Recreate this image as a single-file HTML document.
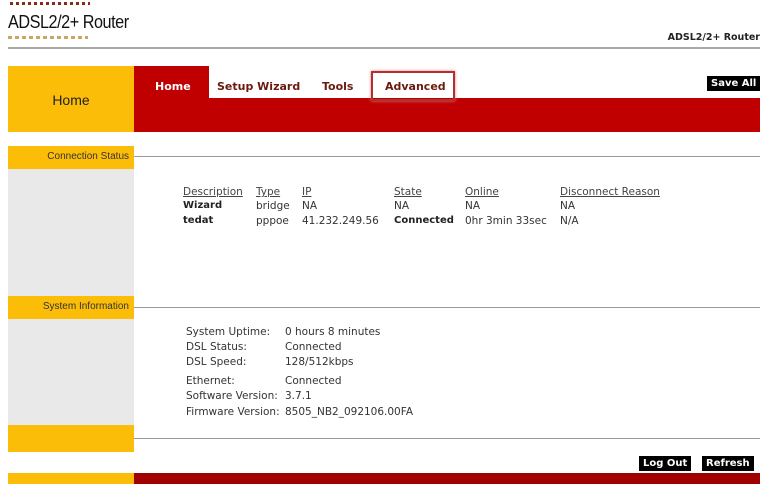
<!DOCTYPE html>
<html><head><style>
body{margin:0;width:768px;height:484px;background:#fff;font-family:"DejaVu Sans","Liberation Sans",sans-serif;position:relative;overflow:hidden}
div{position:absolute}
.t{font-size:10.5px;color:#333;white-space:nowrap}
.b{font-weight:bold;color:#222}
.u{text-decoration:underline;color:#444}
.btn{background:#000;color:#fff;font-weight:bold;font-size:10px;padding:1px 4px;line-height:13px}
.tab{font-size:11px;font-weight:bold;color:#6a1a10;top:80px}
</style></head><body>
<div style="left:10px;top:2px;width:80px;height:3px;background:repeating-linear-gradient(90deg,#8a2a18 0 3px,transparent 3px 6px)"></div>
<div style="left:8px;top:12px;font-family:'Liberation Sans',sans-serif;font-size:18px;letter-spacing:-0.5px;color:#111;transform:scaleX(0.9);transform-origin:left">ADSL2/2+ Router</div>
<div style="left:8px;top:36px;width:80px;height:3px;background:repeating-linear-gradient(90deg,#c8a860 0 4px,transparent 4px 7px)"></div>
<div style="right:8px;top:32px;font-size:9.5px;font-weight:bold;color:#222">ADSL2/2+ Router</div>
<div style="left:8px;top:47px;width:752px;height:2px;background:#aaa"></div>

<div style="left:8px;top:66px;width:126px;height:66px;background:#fbbd08"></div>
<div style="left:8px;top:92px;width:126px;text-align:center;font-family:'Liberation Sans';font-size:14px;color:#222">Home</div>
<div style="left:134px;top:66px;width:75px;height:32px;background:#c00000"></div>
<div style="left:134px;top:98px;width:626px;height:34px;background:#c00000"></div>
<div class="tab" style="left:155px;color:#fff">Home</div>
<div class="tab" style="left:217px">Setup Wizard</div>
<div class="tab" style="left:322px">Tools</div>
<div style="left:371px;top:71px;width:80px;height:26px;border:2px solid #b03030;box-shadow:0 0 3px #d08080"></div>
<div class="tab" style="left:385px">Advanced</div>
<div class="btn" style="left:707px;top:76px">Save All</div>

<div style="left:8px;top:146px;width:126px;height:23px;background:#fbbd08"></div>
<div style="left:8px;top:151px;width:121px;text-align:right;font-family:'Liberation Sans';font-size:10px;color:#333">Connection Status</div>
<div style="left:8px;top:169px;width:126px;height:127px;background:#e9e9e9"></div>
<div style="left:134px;top:156px;width:626px;height:1px;background:#999"></div>
<div style="left:8px;top:296px;width:126px;height:23px;background:#fbbd08"></div>
<div style="left:8px;top:301px;width:121px;text-align:right;font-family:'Liberation Sans';font-size:10px;color:#333">System Information</div>
<div style="left:8px;top:319px;width:126px;height:106px;background:#e9e9e9"></div>
<div style="left:134px;top:307px;width:626px;height:1px;background:#999"></div>
<div style="left:8px;top:425px;width:126px;height:27px;background:#fbbd08"></div>
<div style="left:134px;top:438px;width:626px;height:1px;background:#999"></div>

<div class="t u" style="left:183px;top:186px">Description</div>
<div class="t u" style="left:256px;top:186px">Type</div>
<div class="t u" style="left:302px;top:186px">IP</div>
<div class="t u" style="left:394px;top:186px">State</div>
<div class="t u" style="left:465px;top:186px">Online</div>
<div class="t u" style="left:560px;top:186px">Disconnect Reason</div>
<div class="t b" style="left:183px;top:200px;font-size:10px">Wizard</div>
<div class="t" style="left:256px;top:200px">bridge</div>
<div class="t" style="left:302px;top:200px">NA</div>
<div class="t" style="left:394px;top:200px">NA</div>
<div class="t" style="left:465px;top:200px">NA</div>
<div class="t" style="left:560px;top:200px">NA</div>
<div class="t b" style="left:183px;top:215px;font-size:10px">tedat</div>
<div class="t" style="left:256px;top:215px">pppoe</div>
<div class="t" style="left:302px;top:215px">41.232.249.56</div>
<div class="t b" style="left:394px;top:215px;font-size:10px">Connected</div>
<div class="t" style="left:465px;top:215px">0hr 3min 33sec</div>
<div class="t" style="left:560px;top:215px">N/A</div>

<div class="t" style="left:186px;top:326px">System Uptime:</div><div class="t" style="left:285px;top:326px">0 hours 8 minutes</div>
<div class="t" style="left:186px;top:341px">DSL Status:</div><div class="t" style="left:285px;top:341px">Connected</div>
<div class="t" style="left:186px;top:356px">DSL Speed:</div><div class="t" style="left:285px;top:356px">128/512kbps</div>
<div class="t" style="left:186px;top:375px">Ethernet:</div><div class="t" style="left:285px;top:375px">Connected</div>
<div class="t" style="left:186px;top:390px">Software Version:</div><div class="t" style="left:285px;top:390px">3.7.1</div>
<div class="t" style="left:186px;top:406px">Firmware Version:</div><div class="t" style="left:285px;top:406px">8505_NB2_092106.00FA</div>

<div class="btn" style="left:639px;top:456px">Log Out</div>
<div class="btn" style="left:702px;top:456px">Refresh</div>
<div style="left:8px;top:473px;width:126px;height:11px;background:#fbbd08"></div>
<div style="left:134px;top:473px;width:626px;height:11px;background:#a00000"></div>
</body></html>
